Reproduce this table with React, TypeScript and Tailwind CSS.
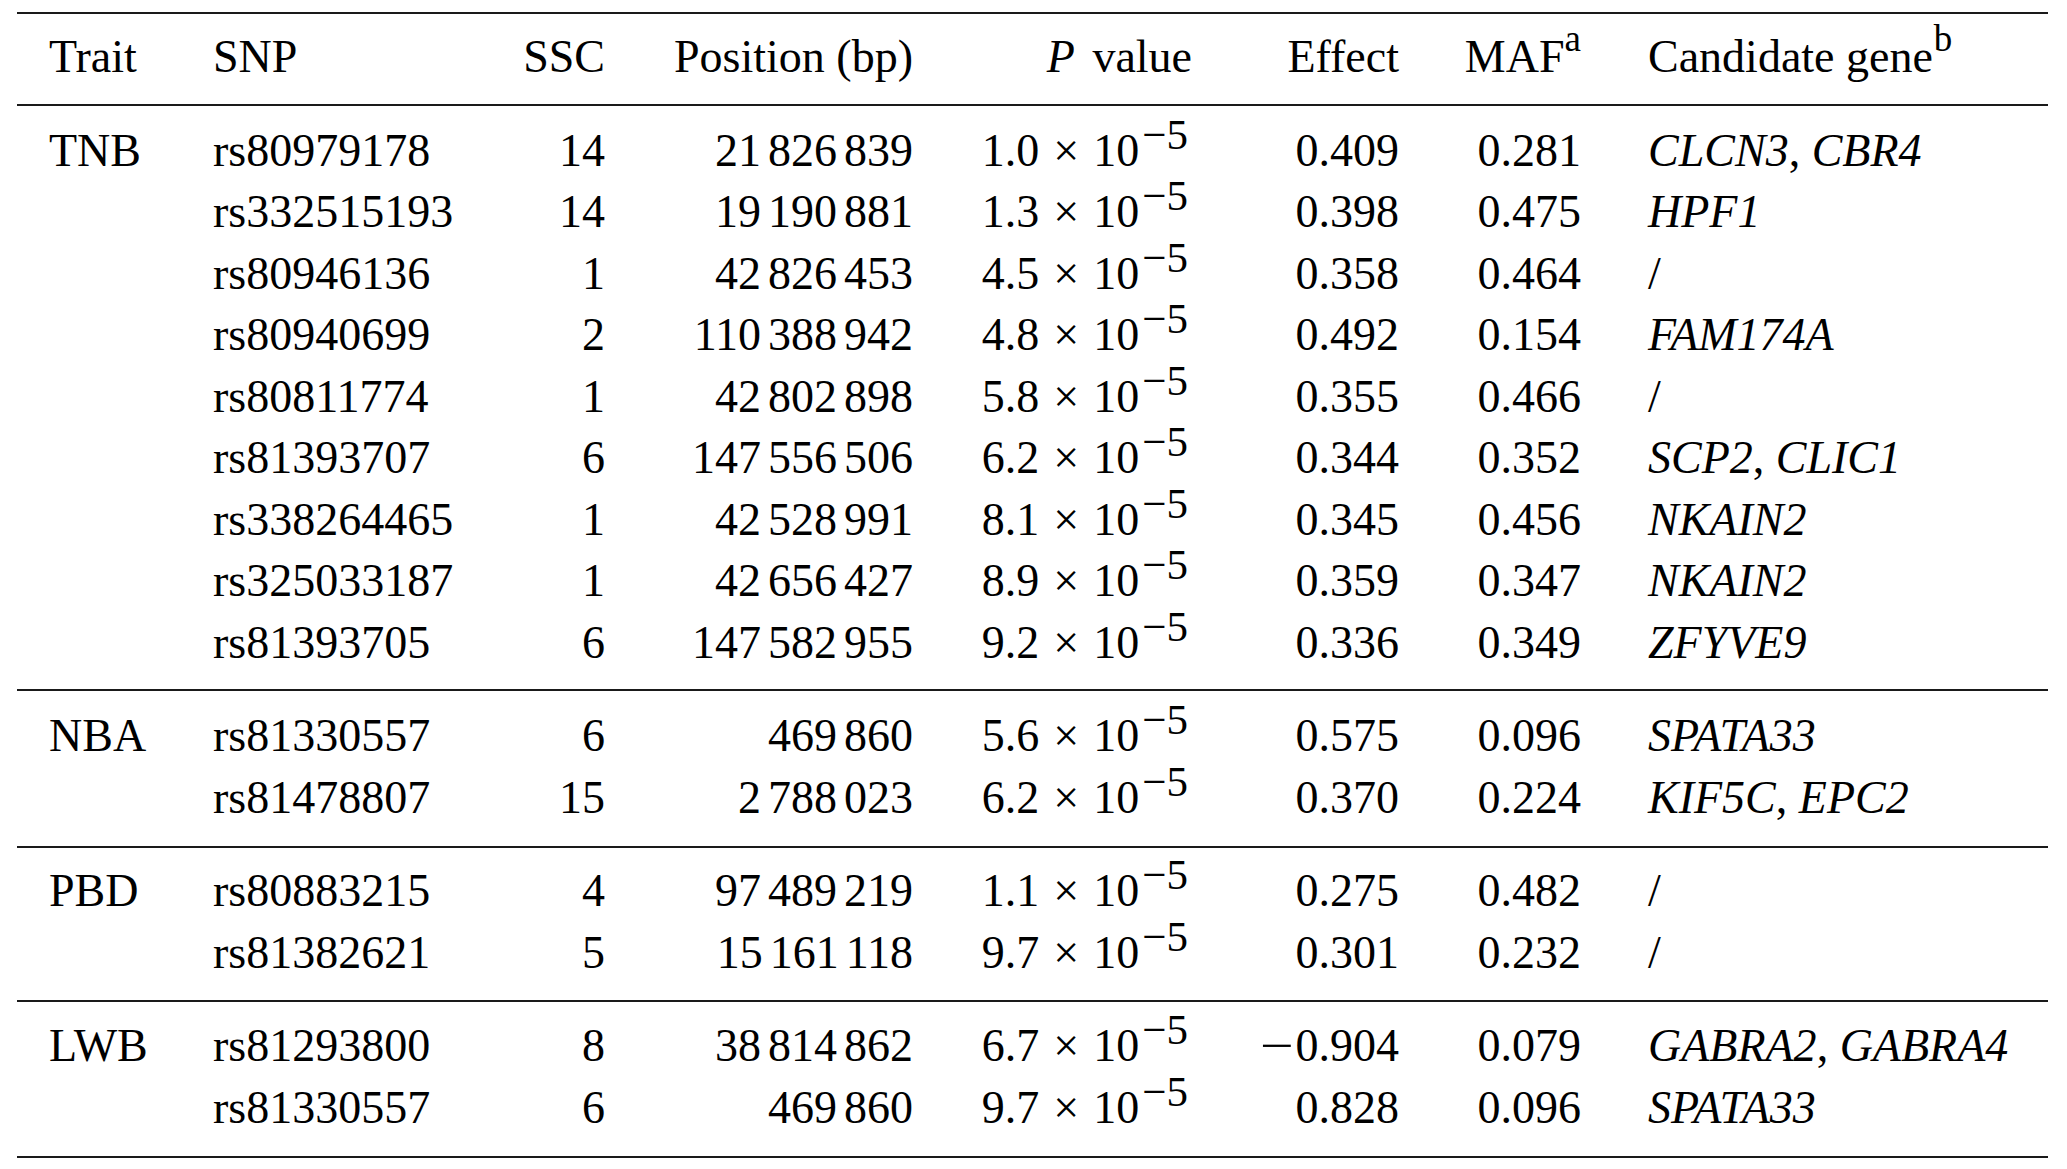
import React from 'react';

type Row = {
  snp: string;
  ssc: string;
  pos: string;
  p: string;
  effect: string;
  maf: string;
  genes: string[];
};

type Group = { trait: string; pt: string; pb: string; rows: Row[] };

const groups: Group[] = [
  {
    trait: 'TNB',
    pt: 'pt-[14px]',
    pb: 'pb-[16px]',
    rows: [
      { snp: 'rs80979178', ssc: '14', pos: '21 826 839', p: '1.0', effect: '0.409', maf: '0.281', genes: ['CLCN3', 'CBR4'] },
      { snp: 'rs332515193', ssc: '14', pos: '19 190 881', p: '1.3', effect: '0.398', maf: '0.475', genes: ['HPF1'] },
      { snp: 'rs80946136', ssc: '1', pos: '42 826 453', p: '4.5', effect: '0.358', maf: '0.464', genes: [] },
      { snp: 'rs80940699', ssc: '2', pos: '110 388 942', p: '4.8', effect: '0.492', maf: '0.154', genes: ['FAM174A'] },
      { snp: 'rs80811774', ssc: '1', pos: '42 802 898', p: '5.8', effect: '0.355', maf: '0.466', genes: [] },
      { snp: 'rs81393707', ssc: '6', pos: '147 556 506', p: '6.2', effect: '0.344', maf: '0.352', genes: ['SCP2', 'CLIC1'] },
      { snp: 'rs338264465', ssc: '1', pos: '42 528 991', p: '8.1', effect: '0.345', maf: '0.456', genes: ['NKAIN2'] },
      { snp: 'rs325033187', ssc: '1', pos: '42 656 427', p: '8.9', effect: '0.359', maf: '0.347', genes: ['NKAIN2'] },
      { snp: 'rs81393705', ssc: '6', pos: '147 582 955', p: '9.2', effect: '0.336', maf: '0.349', genes: ['ZFYVE9'] },
    ],
  },
  {
    trait: 'NBA',
    pt: 'pt-[14px]',
    pb: 'pb-[18px]',
    rows: [
      { snp: 'rs81330557', ssc: '6', pos: '469 860', p: '5.6', effect: '0.575', maf: '0.096', genes: ['SPATA33'] },
      { snp: 'rs81478807', ssc: '15', pos: '2 788 023', p: '6.2', effect: '0.370', maf: '0.224', genes: ['KIF5C', 'EPC2'] },
    ],
  },
  {
    trait: 'PBD',
    pt: 'pt-[12px]',
    pb: 'pb-[17px]',
    rows: [
      { snp: 'rs80883215', ssc: '4', pos: '97 489 219', p: '1.1', effect: '0.275', maf: '0.482', genes: [] },
      { snp: 'rs81382621', ssc: '5', pos: '15 161 118', p: '9.7', effect: '0.301', maf: '0.232', genes: [] },
    ],
  },
  {
    trait: 'LWB',
    pt: 'pt-[13px]',
    pb: 'pb-[18px]',
    rows: [
      { snp: 'rs81293800', ssc: '8', pos: '38 814 862', p: '6.7', effect: '-0.904', maf: '0.079', genes: ['GABRA2', 'GABRA4'] },
      { snp: 'rs81330557', ssc: '6', pos: '469 860', p: '9.7', effect: '0.828', maf: '0.096', genes: ['SPATA33'] },
    ],
  },
];

const cols = 'grid grid-cols-[164px_250px_142px_308px_275px_211px_182px_1fr] items-baseline';

function Position({ value }: { value: string }) {
  const parts = value.split(' ');
  return (
    <span className="inline-flex items-baseline">
      {parts.map((p, i) => (
        <React.Fragment key={i}>
          {i > 0 && <span className="inline-block w-[7px]" />}
          <span>{p}</span>
        </React.Fragment>
      ))}
    </span>
  );
}

function PValue({ mantissa }: { mantissa: string }) {
  return (
    <span className="whitespace-nowrap">
      {mantissa}
      <span className="mx-[14px]">×</span>
      10
      <span className="relative -top-[17px] ml-[3px] text-[43px] leading-[0]">−5</span>
    </span>
  );
}

function Effect({ value }: { value: string }) {
  if (!value.startsWith('-')) return <span>{value}</span>;
  return (
    <span className="whitespace-nowrap">
      <span className="inline-block origin-right scale-x-[1.3] mr-[2px]">−</span>
      {value.slice(1)}
    </span>
  );
}

function Genes({ genes }: { genes: string[] }) {
  if (genes.length === 0) return <span>/</span>;
  return (
    <span className="whitespace-nowrap">
      {genes.map((g, i) => (
        <React.Fragment key={g + i}>
          {i > 0 && ', '}
          <i>{g}</i>
        </React.Fragment>
      ))}
    </span>
  );
}

export default function App() {
  return (
    <div className="min-h-screen bg-white text-black font-['Liberation_Serif','Times_New_Roman',serif] text-[46px] leading-[61.5px]">
      <div className="ml-[17px] w-[2031px] pt-[12px]">
        <div className="border-t-2 border-b-2 border-[#1a1a1a]">
          <div className={`${cols} pl-[32px] pt-[12px] pb-[16px]`}>
            <div>Trait</div>
            <div>SNP</div>
            <div className="text-right">SSC</div>
            <div className="text-right">Position (bp)</div>
            <div className="text-right whitespace-nowrap">
              <span className="-mr-[4px]">
                <i className="mr-[6px]">P</i> value
              </span>
            </div>
            <div className="text-right">Effect</div>
            <div className="text-right whitespace-nowrap">
              MAF<span className="relative -top-[21px] text-[37px] leading-[0]">a</span>
            </div>
            <div className="pl-[67px] whitespace-nowrap">
              Candidate gene<span className="relative -top-[21px] ml-[1px] text-[37px] leading-[0]">b</span>
            </div>
          </div>
        </div>

        {groups.map((g) => (
          <div key={g.trait} className={`border-b-2 border-[#1a1a1a] pl-[32px] ${g.pt} ${g.pb}`}>
            {g.rows.map((r, i) => (
              <div key={r.snp + i} className={cols}>
                <div>{i === 0 ? g.trait : ''}</div>
                <div>{r.snp}</div>
                <div className="text-right">{r.ssc}</div>
                <div className="text-right">
                  <Position value={r.pos} />
                </div>
                <div className="text-right">
                  <PValue mantissa={r.p} />
                </div>
                <div className="text-right">
                  <Effect value={r.effect} />
                </div>
                <div className="text-right">{r.maf}</div>
                <div className="pl-[67px]">
                  <Genes genes={r.genes} />
                </div>
              </div>
            ))}
          </div>
        ))}
      </div>
    </div>
  );
}
